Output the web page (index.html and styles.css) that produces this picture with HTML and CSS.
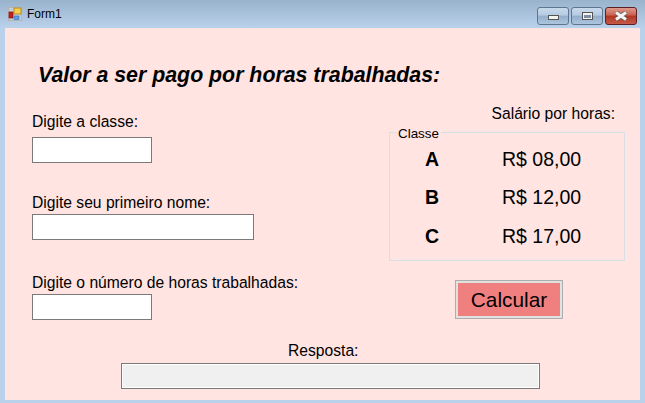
FILE: index.html
```html
<!DOCTYPE html>
<html lang="pt">
<head>
    <meta charset="UTF-8">
    <title>Form1</title>
    <link rel="stylesheet" href="styles.css">
</head>
<body>
    <div class="titlebar">
        <svg class="app-icon" width="14" height="14" viewBox="0 0 14 14">
            <rect x="0.5" y="0.5" width="13" height="13" fill="#c3cfdc" stroke="#b5b5b5"/>
            <rect x="1" y="5" width="4" height="6" fill="#c8201c" stroke="#7c1410" stroke-width="0.7"/>
            <rect x="6" y="1" width="7" height="6" fill="#f6cf4e" stroke="#a97f10" stroke-width="0.8"/>
            <rect x="6" y="9" width="5" height="3.5" fill="#5d9de8" stroke="#3a6fb5" stroke-width="0.6"/>
        </svg>
        <span class="title">Form1</span>
        <div class="window-buttons">
            <div class="win-btn"><span class="min-glyph"></span></div>
            <div class="win-btn"><span class="max-glyph"></span></div>
            <div class="win-btn close">
                <svg width="14" height="10" viewBox="0 0 14 10">
                    <path d="M2 1.5 L12 8.5 M12 1.5 L2 8.5" stroke="#5a5a5a" stroke-width="4.4"/>
                    <path d="M2 1.5 L12 8.5 M12 1.5 L2 8.5" stroke="#f4f4f4" stroke-width="3"/>
                </svg>
            </div>
        </div>
    </div>

    <div class="client">
        <h1>Valor a ser pago por horas trabalhadas:</h1>

        <div class="columns">
            <div class="inputs">
                <label class="first">Digite a classe:</label>
                <input class="box short" type="text">
                <label class="second">Digite seu primeiro nome:</label>
                <input class="box long" type="text">
                <label class="third">Digite o número de horas trabalhadas:</label>
                <input class="box short" type="text">
            </div>

            <div class="prices">
                <div class="prices-title">Salário por horas:</div>
                <fieldset class="group">
                    <legend>Classe</legend>
                    <div class="row"><b>A</b><span>R$ 08,00</span></div>
                    <div class="row"><b>B</b><span>R$ 12,00</span></div>
                    <div class="row"><b>C</b><span>R$ 17,00</span></div>
                </fieldset>
                <button class="calc" type="button">Calcular</button>
            </div>
        </div>

        <div class="answer">
            <div class="answer-label">Resposta:</div>
            <div class="answer-box"></div>
        </div>
    </div>
</body>
</html>
```

FILE: styles.css
```css
* {
    box-sizing: border-box;
}
html, body {
    margin: 0;
    height: 403px;
    overflow: hidden;
}
body {
    width: 645px;
    font-family: "Liberation Sans", Arial, sans-serif;
    color: #000;
    background-color: #b9d1ea;
}

/* window frame */
.titlebar {
    display: flex;
    align-items: center;
    height: 28px;
    padding-left: 8px;
    background: linear-gradient(#9ab3cd, #b9d1ea);
}
.app-icon {
    flex: none;
}
.title {
    margin-left: 5px;
    font-size: 12px;
}
.window-buttons {
    display: flex;
    gap: 2px;
    margin-left: auto;
    margin-right: 8px;
    align-self: flex-start;
    margin-top: 7px;
}
.win-btn {
    display: flex;
    align-items: center;
    justify-content: center;
    width: 32px;
    height: 18px;
    border: 1px solid #5f7590;
    border-radius: 3px;
    background: linear-gradient(#c9d9ea 0%, #b5cbe2 45%, #93aecb 50%, #adc5de 100%);
}
.close {
    border-color: #5b1f24;
    background: linear-gradient(#dd9a8e 0%, #c9614f 45%, #b23422 50%, #c65a48 100%);
}
.min-glyph {
    width: 11px;
    height: 5px;
    margin-top: 3px;
    border: 1px solid #555;
    background-color: #f2f2f2;
}
.max-glyph {
    width: 9px;
    height: 6px;
    border: 1px solid #f2f2f2;
    border-top-width: 2px;
    outline: 1px solid #555;
    background-color: #7d8da3;
}

/* form area */
.client {
    height: 372px;
    margin: 0 5px;
    padding-top: 35px;
    background-color: #ffe4e1;
}
h1 {
    margin: 0 0 0 33px;
    font-size: 21.33px;
    line-height: 24px;
    font-style: italic;
    font-weight: bold;
}
.columns {
    display: flex;
    justify-content: space-between;
    height: 224px;
    margin-top: 17px;
}
.inputs {
    display: flex;
    flex-direction: column;
    align-items: flex-start;
    padding-left: 27px;
}
label {
    font-size: 15.65px;
    line-height: 18px;
}
.first {
    margin-top: 9px;
    margin-bottom: 6px;
}
.second, .third {
    margin-bottom: 2px;
}
.second {
    margin-top: 31px;
}
.third {
    margin-top: 34px;
}
.box {
    height: 26px;
    padding: 0;
    border: 1px solid #7a7a7a;
    border-radius: 0;
    background-color: #fff;
}
.short {
    width: 120px;
}
.long {
    width: 222px;
}

/* price table */
.prices {
    width: 236px;
    margin-right: 15px;
}
.prices-title {
    padding-top: 1px;
    padding-right: 10px;
    font-size: 15.65px;
    line-height: 18px;
    text-align: right;
}
.group {
    display: flex;
    flex-direction: column;
    height: 137px;
    margin: 1px 0 0;
    padding: 0;
    border: 1px solid #d5dfe5;
}
.group legend {
    margin: 0 0 -1px 6px;
    padding: 2px 2px 0 2px;
    font-size: 13.4px;
    line-height: 15px;
}
.row {
    display: flex;
    align-items: center;
    height: 38.5px;
    font-size: 19.5px;
}
.row b {
    width: 84px;
    text-align: center;
    font-size: 19.5px;
}
.row span {
    margin-left: 28px;
}
.calc {
    display: block;
    width: 108px;
    height: 39px;
    margin: 19px 0 0 66px;
    padding: 0;
    border: 3px solid #e1e1e1;
    outline: 1px solid #adadad;
    outline-offset: -1px;
    background-color: #f08080;
    font-family: "Liberation Sans", Arial, sans-serif;
    font-size: 20.8px;
    color: #000;
}

/* result */
.answer {
    display: flex;
    flex-direction: column;
    align-items: flex-start;
    margin-top: 14px;
}
.answer-label {
    margin-left: 283px;
    font-size: 15.65px;
    line-height: 18px;
}
.answer-box {
    width: 419px;
    height: 26px;
    margin-left: 116px;
    margin-top: 3px;
    border: 1px solid #7a7a7a;
    box-shadow: inset 0 0 0 1px #fff;
    background-color: #f0f0f0;
}
```
